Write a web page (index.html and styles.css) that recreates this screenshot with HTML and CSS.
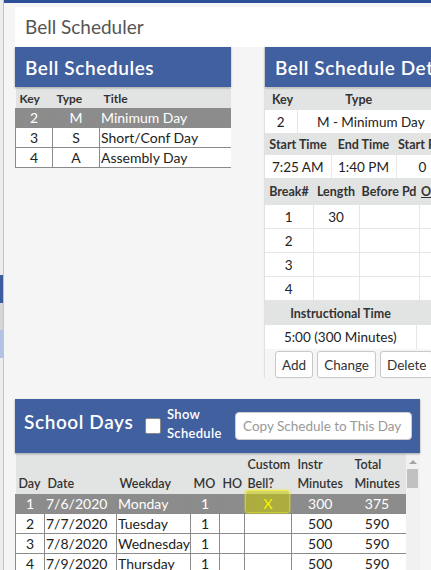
FILE: index.html
```html
<!DOCTYPE html>
<html>
<head>
<title>Bell Scheduler</title>
<link rel="stylesheet" href="styles.css">
</head>
<body>
<div class="sidebar">
    <div class="side-blue"></div>
    <div class="side-gray"></div>
    <div class="side-light"></div>
</div>
<div class="main">
    <div class="page-title">Bell Scheduler</div>

    <div class="panel-row">
        <div class="panel schedules">
            <div class="panel-head">Bell Schedules</div>
            <table class="grid list">
                <colgroup><col style="width:37px"><col style="width:47px"><col></colgroup>
                <tr class="head"><th>Key</th><th>Type</th><th class="left">Title</th></tr>
                <tr class="selected"><td>2</td><td>M</td><td class="left">Minimum Day</td></tr>
                <tr><td>3</td><td>S</td><td class="left">Short/Conf Day</td></tr>
                <tr><td>4</td><td>A</td><td class="left">Assembly Day</td></tr>
            </table>
        </div>

        <div class="panel details">
            <div class="panel-head">Bell Schedule Details</div>
            <div class="detail-body">
                <table class="dtable keytype">
                    <colgroup><col style="width:32px"><col></colgroup>
                    <tr class="head"><th>Key</th><th class="type-th">Type</th></tr>
                    <tr><td>2</td><td>M - Minimum Day</td></tr>
                </table>
                <table class="dtable">
                    <colgroup><col style="width:66px"><col style="width:65px"><col></colgroup>
                    <tr class="head"><th>Start Time</th><th>End Time</th><th class="left">Start Pd</th></tr>
                    <tr><td>7:25 AM</td><td>1:40 PM</td><td class="left pad">0</td></tr>
                </table>
                <table class="dtable breaks">
                    <colgroup><col style="width:48px"><col style="width:46px"><col style="width:60px"><col></colgroup>
                    <tr class="head"><th>Break#</th><th>Length</th><th>Before Pd</th><th class="left"><u>O</u>n</th></tr>
                    <tr><td>1</td><td>30</td><td></td><td></td></tr>
                    <tr><td>2</td><td></td><td></td><td></td></tr>
                    <tr><td>3</td><td></td><td></td><td></td></tr>
                    <tr><td>4</td><td></td><td></td><td></td></tr>
                </table>
                <table class="dtable instr">
                    <colgroup><col style="width:151px"><col></colgroup>
                    <tr class="head"><th>Instructional Time</th><th></th></tr>
                    <tr><td>5:00 (300 Minutes)</td><td></td></tr>
                </table>
            </div>
            <div class="buttons">
                <button>Add</button>
                <button>Change</button>
                <button>Delete</button>
            </div>
        </div>
    </div>

    <div class="panel days">
        <div class="panel-head days-head">
            <span class="days-title">School Days</span>
            <span class="check"></span>
            <span class="show-label">Show<br>Schedule</span>
            <input type="text" class="copy-input" placeholder="Copy Schedule to This Day">
        </div>
        <div class="days-body">
            <table class="grid days-table">
                <colgroup>
                    <col style="width:29px"><col style="width:72px"><col style="width:74px"><col style="width:29px">
                    <col style="width:25px"><col style="width:47px"><col style="width:57px"><col style="width:57px">
                </colgroup>
                <tr class="head">
                    <th>Day</th><th class="left">Date</th><th class="left">Weekday</th><th>MO</th><th>HO</th>
                    <th class="left">Custom<br>Bell?</th><th class="left wide">Instr<br>Minutes</th><th class="left wide">Total<br>Minutes</th>
                </tr>
                <tr class="selected">
                    <td>1</td><td class="left">7/6/2020</td><td class="left">Monday</td><td>1</td><td></td>
                    <td class="hl"><span class="hl-mark"></span><span class="hl-x">X</span></td><td class="noline">300</td><td class="noline">375</td>
                </tr>
                <tr><td>2</td><td class="left">7/7/2020</td><td class="left">Tuesday</td><td>1</td><td></td><td></td><td class="noline">500</td><td class="noline">590</td></tr>
                <tr><td>3</td><td class="left">7/8/2020</td><td class="left">Wednesday</td><td>1</td><td></td><td></td><td class="noline">500</td><td class="noline">590</td></tr>
                <tr><td>4</td><td class="left">7/9/2020</td><td class="left">Thursday</td><td>1</td><td></td><td></td><td class="noline">500</td><td class="noline">590</td></tr>
            </table>
            <div class="scrollbar">
                <div class="arrow"></div>
                <div class="thumb"></div>
            </div>
        </div>
    </div>
</div>
</body>
</html>
```

FILE: styles.css
```css
html, body {
    margin: 0;
    height: 100%;
    overflow: hidden;
}

body {
    display: flex;
    font-family: Lato, "Open Sans", sans-serif;
    background-color: #f5f5f5;
    color: #222;
}

.sidebar {
    width: 3px;
    flex-shrink: 0;
    background-color: #ededed;
    border-right: 1px solid #c4c4c4;
    padding-top: 275px;
}

.side-blue {
    height: 28px;
    background-color: #3d5c9f;
}

.side-gray {
    height: 27px;
    background-color: #d6d6d6;
}

.side-light {
    height: 28px;
    background-color: #b3c2e2;
}

.main {
    flex: 1;
    min-width: 0;
    border-top: 3px solid #2c4f97;
    padding: 4px 0 0 11px;
}

.page-title {
    background-color: white;
    height: 40px;
    line-height: 40px;
    padding-left: 10px;
    font-size: 19px;
    color: #555;
}

.panel-row {
    display: flex;
    gap: 34px;
    align-items: flex-start;
}

.panel {
    flex-shrink: 0;
}

.panel-head {
    background-color: #41609f;
    color: white;
    height: 40px;
    line-height: 41px;
    padding-left: 10px;
    font-size: 19px;
    font-weight: 600;
    letter-spacing: 0.6px;
    white-space: nowrap;
    box-shadow: 0 1px 2px rgba(0, 0, 0, 0.35);
    position: relative;
}

.schedules {
    width: 216px;
}

.grid {
    border-collapse: collapse;
    table-layout: fixed;
    width: 100%;
    margin-top: 1px;
    font-size: 14px;
}

.grid th {
    background-color: #e2e3e3;
    font-size: 12px;
    font-weight: 700;
    color: #333;
    text-align: left;
    padding: 0 4px;
    height: 20px;
}

.grid td {
    background-color: white;
    text-align: center;
    height: 19px;
    padding: 0 2px;
    border: 1px solid #8a8a8a;
    border-top: none;
    white-space: nowrap;
}

.grid td:last-child {
    border-right: none;
}

.grid td.left {
    text-align: left;
    padding-left: 1px;
}

.grid tr.selected td {
    background-color: #8c8c8c;
    color: white;
}

/* details */

.details {
    width: 180px;
    background-color: white;
    box-shadow: -1px 0 1px rgba(0, 0, 0, 0.08);
}

.detail-body {
    padding-top: 1px;
}

.dtable {
    border-collapse: collapse;
    table-layout: fixed;
    width: 100%;
    font-size: 13.5px;
}

.dtable th {
    background-color: #e2e3e3;
    font-size: 12.5px;
    font-weight: 700;
    color: #333;
    height: 22px;
    padding: 0 2px;
    white-space: nowrap;
    overflow: hidden;
}

.dtable th.left {
    text-align: left;
}

.keytype th.type-th {
    padding-right: 26px;
}

.dtable td {
    text-align: center;
    height: 23px;
    padding: 0;
    border-right: 1px solid #e6e6e6;
    white-space: nowrap;
}

.dtable td.pad {
    padding-left: 22px;
    text-align: left;
}

.keytype th:first-child {
    text-align: left;
    padding-left: 7px;
}

.breaks th {
    height: 27px;
}

.breaks td {
    height: 23px;
    border-bottom: 1px solid #e6e6e6;
}

.instr th {
    height: 24px;
}

.instr td {
    height: 24px;
}

.buttons {
    background-color: #f5f5f5;
    padding: 2px 0 0 10px;
    display: flex;
    gap: 4px;
}

button {
    font-family: Lato, "Open Sans", sans-serif;
    font-size: 13.5px;
    color: #333;
    background-color: white;
    border: 1px solid #c8c8c8;
    border-radius: 3px;
    height: 27px;
    padding: 0 6px;
    flex-shrink: 0;
}

/* school days */

.days {
    width: 405px;
    margin-top: 21px;
}

.days-head {
    height: 54px;
    display: flex;
    align-items: center;
    padding-left: 9px;
    line-height: normal;
}

.days-title {
    width: 121px;
    margin-bottom: 10px;
}

.check {
    width: 14px;
    height: 14px;
    background-color: white;
    border: 1px solid #888;
    border-radius: 2px;
}

.show-label {
    font-size: 13px;
    font-weight: 600;
    letter-spacing: 0.3px;
    line-height: 19px;
    margin: 0 0 4px 6px;
    width: 68px;
}

.copy-input {
    width: 161px;
    height: 26px;
    border: 1px solid #ccc;
    border-radius: 4px;
    padding: 0 7px;
    font-family: Lato, "Open Sans", sans-serif;
    font-size: 13.5px;
    letter-spacing: 0;
}

.copy-input::placeholder {
    color: #999;
}

.days-body {
    display: flex;
    align-items: flex-start;
}

.days-table {
    width: 390px;
    margin-top: 1px;
}

.days-table th {
    height: 39px;
    vertical-align: bottom;
    font-size: 12.5px;
    font-weight: 600;
    padding: 0 0 1px 3px;
    line-height: 19px;
}

.days-table th.wide {
    padding-left: 6px;
}

.days-table td.left {
    padding-left: 1px;
}

.days-table td.noline {
    border-left: none;
    border-right: none;
}

.days-table td.hl {
    position: relative;
}

.hl-mark {
    position: absolute;
    left: 1px;
    right: 2px;
    top: -3px;
    bottom: 1px;
    background-color: rgba(200, 200, 0, 0.55);
    box-shadow: 0 0 2px 1px rgba(240, 240, 0, 0.9);
    border-radius: 2px;
}

.hl-x {
    position: relative;
    color: #f6f600;
}

.scrollbar {
    width: 15px;
    height: 200px;
    background-color: #f1f1f1;
    margin-top: 1px;
}

.arrow {
    width: 0;
    height: 0;
    margin: 6px auto 0;
    border-left: 4px solid transparent;
    border-right: 4px solid transparent;
    border-bottom: 4px solid #a3a3a3;
}

.thumb {
    height: 19px;
    margin: 5px 2px 0 1px;
    background-color: #c1c1c1;
}
```
